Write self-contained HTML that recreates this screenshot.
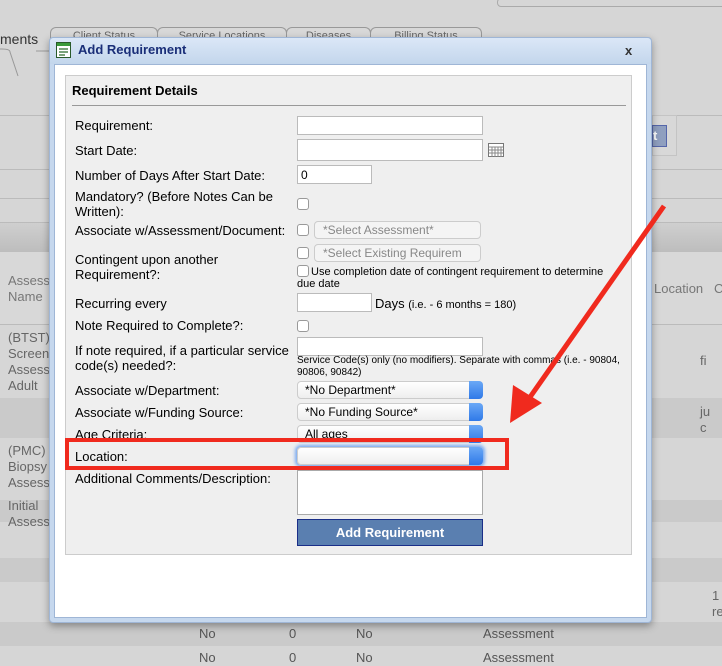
<!DOCTYPE html>
<html><head><meta charset="utf-8"><style>
*{margin:0;padding:0;box-sizing:border-box}
body{width:722px;height:658px;overflow:hidden;background:#d6d6d6;font-family:"Liberation Sans",Arial,sans-serif;font-size:13px;color:#000;position:relative}
.a{position:absolute}
.g{color:#777;font-size:13px;line-height:16px}
.l{position:absolute;left:75px;font-size:13px;line-height:15px}
.in{position:absolute;left:297px;width:186px;height:19px;background:#fff;border:1px solid #bbb}
.cb{position:absolute;width:12px;height:12px;border:1px solid #999;border-radius:3px;background:#fff}
.sel{position:absolute;left:297px;width:186px;height:18px;background:linear-gradient(#fff,#eee);border:1px solid #ccc;border-radius:4px;font-size:12px;line-height:16px;padding-left:7px}
.sel:after{content:"";position:absolute;right:-1px;top:-1px;width:14px;height:18px;background:linear-gradient(#6aa8f6,#2f79e8);border-radius:0 4px 4px 0}
.gs{position:absolute;left:314px;width:167px;height:18px;border:1px solid #ccc;border-radius:4px;background:#f4f4f4;color:#888;font-size:12px;line-height:16px;padding-left:8px}
.hl{position:absolute;left:0;width:722px;height:1px;background:#bbb}
.tab{position:absolute;top:27px;height:14px;border:1px solid #999;border-bottom:none;border-radius:6px 6px 0 0;background:#d8d8d8;font-size:11px;color:#666;text-align:center;line-height:16px;overflow:hidden}
</style></head><body>
<!-- background page -->
<div class="a" style="left:497px;top:-2px;width:230px;height:9px;border:1px solid #aaa;border-radius:4px"></div>
<div class="a" style="left:0;top:31px;font-size:14px;color:#333">ments</div>
<div class="tab" style="left:50px;width:108px">Client Status</div>
<div class="tab" style="left:157px;width:130px">Service Locations</div>
<div class="tab" style="left:286px;width:85px">Diseases</div>
<div class="tab" style="left:370px;width:112px">Billing Status</div>
<svg class="a" style="left:0;top:24px" width="50" height="55"><path d="M0 25 H2 Q10 25 10 28 L18 52" stroke="#999" fill="none"/><path d="M36 27 L50 27" stroke="#999"/></svg>
<div class="hl" style="top:115px"></div>
<div class="a" style="left:652px;top:115px;width:25px;height:41px;border:1px solid #c4c4c4;background:#d8d8d8"></div>
<div class="a" style="left:652px;top:125px;width:15px;height:22px;background:#8f9fbf;border:1px solid #5566aa;color:#fff;font-weight:bold;font-size:13px;line-height:20px">t</div>
<div class="hl" style="top:169px"></div>
<div class="hl" style="top:198px"></div>
<div class="hl" style="top:222px"></div>
<div class="a" style="left:0;top:223px;width:722px;height:29px;background:linear-gradient(#cfcfcf,#bdbdbd)"></div>
<div class="a" style="left:0;top:252px;width:722px;height:73px;background:#d8d8d8;border-bottom:1px solid #bbb"></div>
<div class="a g" style="left:8px;top:273px">Assess<br>Name</div>
<div class="a g" style="left:654px;top:281px">Location</div>
<div class="a g" style="left:714px;top:281px">C</div>
<div class="a" style="left:0;top:398px;width:722px;height:40px;background:#cacaca"></div>
<div class="a" style="left:0;top:500px;width:722px;height:22px;background:#cacaca"></div>
<div class="a" style="left:0;top:558px;width:722px;height:24px;background:#cacaca"></div>
<div class="a" style="left:0;top:622px;width:722px;height:24px;background:#cacaca"></div>
<div class="a g" style="left:8px;top:330px;color:#666">(BTST)<br>Screen<br>Assess<br>Adult</div>
<div class="a g" style="left:700px;top:353px;color:#666">fi</div>
<div class="a g" style="left:700px;top:404px;color:#666">ju<br>c</div>
<div class="a g" style="left:8px;top:443px;color:#666">(PMC)<br>Biopsy<br>Assess</div>
<div class="a g" style="left:8px;top:498px;color:#666">Initial<br>Assess</div>
<div class="a g" style="left:712px;top:588px;color:#666">1<br>re</div>
<div class="a g" style="left:199px;top:626px;color:#555">No</div>
<div class="a g" style="left:289px;top:626px;color:#555">0</div>
<div class="a g" style="left:356px;top:626px;color:#555">No</div>
<div class="a g" style="left:483px;top:626px;color:#555">Assessment</div>
<div class="a g" style="left:199px;top:650px;color:#555">No</div>
<div class="a g" style="left:289px;top:650px;color:#555">0</div>
<div class="a g" style="left:356px;top:650px;color:#555">No</div>
<div class="a g" style="left:483px;top:650px;color:#555">Assessment</div>

<!-- dialog -->
<div class="a" style="left:49px;top:37px;width:603px;height:586px;background:#c6d8ee;border:1px solid #9fb6d6;border-radius:4px;box-shadow:0 3px 8px rgba(0,0,0,.35)"></div>
<div class="a" style="left:50px;top:38px;width:601px;height:26px;background:linear-gradient(#dbe7f7,#c3d6ec);border-radius:4px 4px 0 0"></div>
<svg class="a" style="left:56px;top:42px" width="16" height="17" viewBox="0 0 16 17"><rect x="0.5" y="0.5" width="14" height="15" fill="#fff" stroke="#2a5a2a"/><rect x="1" y="1" width="13" height="3" fill="#3a9a3a"/><path d="M3 7h9M3 10h9M3 13h6" stroke="#2a6a2a" stroke-width="1.3"/></svg>
<div class="a" style="left:78px;top:42px;font-weight:bold;font-size:13px;color:#1a2e78">Add Requirement</div>
<div class="a" style="left:625px;top:43px;font-weight:bold;font-size:13px;color:#333">x</div>
<div class="a" style="left:54px;top:64px;width:593px;height:554px;background:#fff;border:1px solid #9fb6d6"></div>
<div class="a" style="left:65px;top:75px;width:567px;height:480px;background:#efefef;border:1px solid #ccc"></div>
<div class="a" style="left:72px;top:83px;font-weight:bold;font-size:13px">Requirement Details</div>
<div class="a" style="left:72px;top:105px;width:554px;height:1px;background:#999"></div>

<div class="l" style="top:118px">Requirement:</div><div class="in" style="top:116px"></div>
<div class="l" style="top:143px">Start Date:</div><div class="in" style="top:139px;height:22px"></div>
<svg class="a" style="left:488px;top:143px" width="16" height="14"><rect x=".5" y=".5" width="15" height="13" fill="#fff" stroke="#777"/><path d="M1 4h14M1 7h14M1 10h14M4 4v10M7 4v10M10 4v10M13 4v10" stroke="#888"/></svg>
<div class="l" style="top:168px">Number of Days After Start Date:</div><div class="in" style="left:297px;width:75px;top:165px;font-size:12px;padding:2px 3px">0</div>
<div class="l" style="top:189px">Mandatory? (Before Notes Can be<br>Written):</div><div class="cb" style="left:297px;top:198px"></div>
<div class="l" style="top:223px">Associate w/Assessment/Document:</div><div class="cb" style="left:297px;top:224px"></div><div class="gs" style="top:221px">*Select Assessment*</div>
<div class="l" style="top:252px">Contingent upon another<br>Requirement?:</div><div class="cb" style="left:297px;top:247px"></div><div class="gs" style="top:244px">*Select Existing Requirem</div>
<div class="cb" style="left:297px;top:265px"></div><div class="a" style="left:311px;top:265px;font-size:11px;line-height:14px">Use completion date of contingent requirement to determine</div><div class="a" style="left:297px;top:278px;font-size:11px">due date</div>
<div class="l" style="top:296px">Recurring every</div><div class="in" style="width:75px;top:293px"></div><div class="a" style="left:375px;top:296px;font-size:13px">Days <span style="font-size:11px">(i.e. - 6 months = 180)</span></div>
<div class="l" style="top:318px">Note Required to Complete?:</div><div class="cb" style="left:297px;top:320px"></div>
<div class="l" style="top:343px">If note required, if a particular service<br>code(s) needed?:</div><div class="in" style="top:337px;width:186px"></div>
<div class="a" style="left:297px;top:355px;font-size:10px;line-height:12px">Service Code(s) only (no modifiers). Separate with commas (i.e. - 90804,<br>90806, 90842)</div>
<div class="l" style="top:383px">Associate w/Department:</div><div class="sel" style="top:381px">*No Department*</div>
<div class="l" style="top:405px">Associate w/Funding Source:</div><div class="sel" style="top:403px">*No Funding Source*</div>
<div class="l" style="top:427px">Age Criteria:</div><div class="sel" style="top:425px">All ages</div>
<div class="l" style="top:449px">Location:</div><div class="sel" style="top:447px;box-shadow:0 0 3px 2px #7aaaf0"></div>
<div class="l" style="top:471px">Additional Comments/Description:</div><div class="a" style="left:297px;top:470px;width:186px;height:45px;background:#fff;border:1px solid #aaa"></div>
<div class="a" style="left:297px;top:519px;width:186px;height:27px;background:#5a7fb0;border:1px solid #1a2e88;color:#fff;font-weight:bold;font-size:13px;text-align:center;line-height:25px">Add Requirement</div>

<!-- annotations -->
<div class="a" style="left:65px;top:438px;width:444px;height:32px;border:4px solid #f02a1e"></div>
<svg class="a" style="left:0;top:0" width="722" height="658"><line x1="664" y1="206" x2="528" y2="400" stroke="#f02a1e" stroke-width="5"/><polygon points="510,423 513,385 542,403" fill="#f02a1e"/></svg>
</body></html>
